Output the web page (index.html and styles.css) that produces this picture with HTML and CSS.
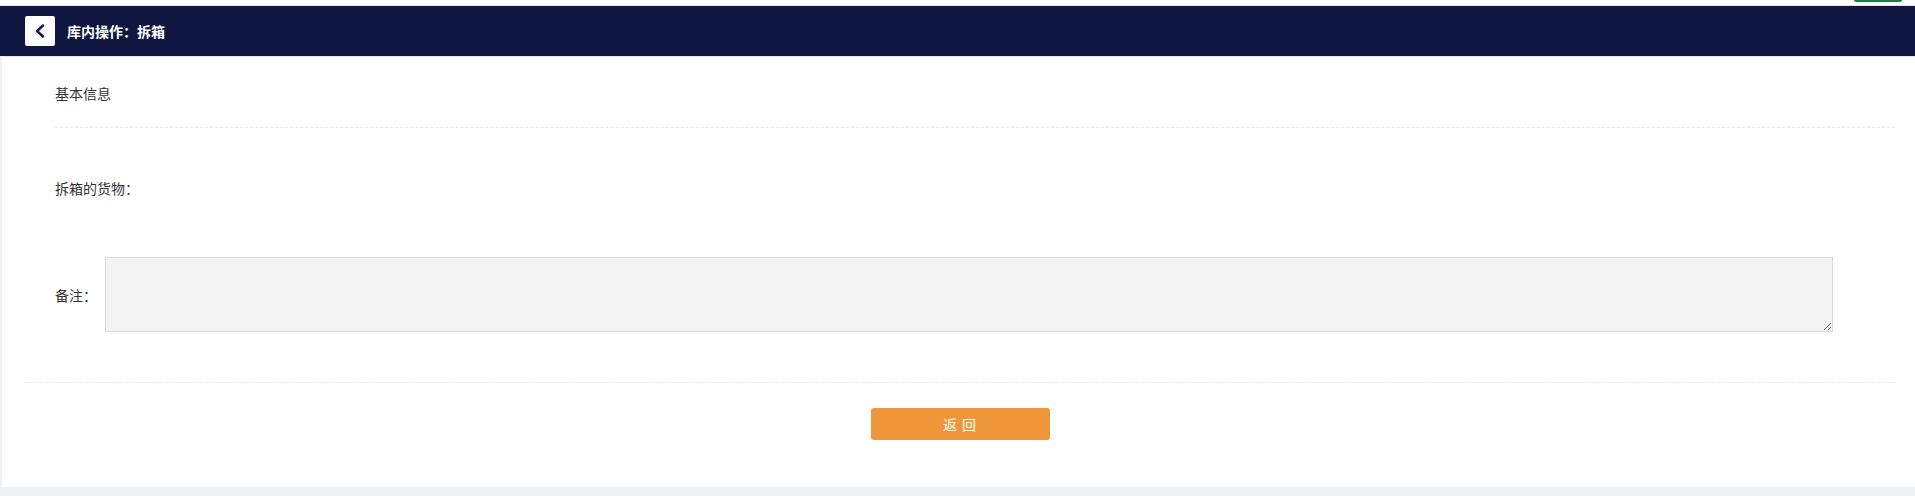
FILE: index.html
```html
<!DOCTYPE html>
<html lang="zh-CN">
<head>
<meta charset="utf-8">
<title>库内操作：拆箱</title>
<link rel="stylesheet" href="styles.css">
</head>
<body>
<div class="topstrip"><span class="topbtn"></span></div>
<header class="header">
  <a class="back" href="#" aria-label="返回">
    <svg width="12" height="14" viewBox="0 0 12 14"><path d="M9 1.5 L3 7 L9 12.5" fill="none" stroke="#0f1740" stroke-width="2.4" stroke-linecap="round" stroke-linejoin="round"/></svg>
  </a>
  <h1 class="title">库内操作：拆箱</h1>
</header>
<main class="panel">
  <section class="info">
    <div class="section-title">基本信息</div>
  </section>
  <div class="form">
    <div class="row goods"><span class="label">拆箱的货物：</span></div>
    <div class="row remark">
      <label class="label narrow" for="remark">备注：</label>
      <textarea id="remark" class="textarea"></textarea>
    </div>
  </div>
  <div class="footer">
    <button class="btn" type="button">返&nbsp;回</button>
  </div>
</main>
</body>
</html>
```
FILE: styles.css
```css
html, body {
  margin: 0;
  padding: 0;
}
body {
  background: #f0f1f5;
  font-family: "Microsoft YaHei", "Noto Sans CJK SC", "Noto Sans", sans-serif;
  font-size: 14px;
  color: #333;
  height: 496px;
  overflow: hidden;
}
.topstrip {
  height: 5px;
  background: #fff;
  border-bottom: 1px solid #e3e4e8;
  display: flex;
  justify-content: flex-end;
  padding-right: 13px;
}
.topbtn {
  width: 48px;
  height: 2px;
  background: #1d7d3c;
  border-radius: 0 0 3px 3px;
}
.header {
  background: #0f1740;
  display: flex;
  align-items: center;
  padding-left: 25px;
  box-sizing: border-box;
  border-bottom: 1px solid #e4e5ea;
  height: 51px;
}
.back {
  width: 30px;
  height: 30px;
  background: #fff;
  border-radius: 2px;
  display: flex;
  align-items: center;
  justify-content: center;
}
.title {
  margin: 0 0 0 12px;
  font-size: 14px;
  font-weight: bold;
  color: #fff;
  line-height: 20px;
}
.panel {
  margin-left: 2px;
  background: #fff;
  height: 430px;
  box-sizing: border-box;
}
.info {
  padding: 26px 20px 0 53px;
}
.section-title {
  line-height: 20px;
  padding-bottom: 24px;
  border-bottom: 1px dashed #e8e9ec;
  color: #333;
}
.form {
  padding: 0 20px 0 53px;
}
.row {
  display: flex;
  align-items: center;
}
.goods {
  margin-top: 50px;
  line-height: 20px;
}
.remark {
  margin-top: 59px;
}
.label {
  line-height: 20px;
  color: #333;
}
.narrow {
  width: 50px;
  flex: none;
}
.textarea {
  width: 1728px;
  height: 75px;
  box-sizing: border-box;
  background: #f3f3f3;
  border: 1px solid #d9d9d9;
  border-radius: 0;
  margin: 0;
  padding: 4px;
  font-family: inherit;
  font-size: 14px;
}
.footer {
  margin: 50px 20px 0 23px;
  border-top: 1px dashed #e8e9ec;
  padding-top: 25px;
  display: flex;
  justify-content: center;
}
.btn {
  width: 179px;
  height: 32px;
  background: #f0963a;
  border: none;
  border-radius: 3px;
  color: #fff;
  font-family: inherit;
  font-size: 14px;
  letter-spacing: 1px;
  cursor: pointer;
}
```
